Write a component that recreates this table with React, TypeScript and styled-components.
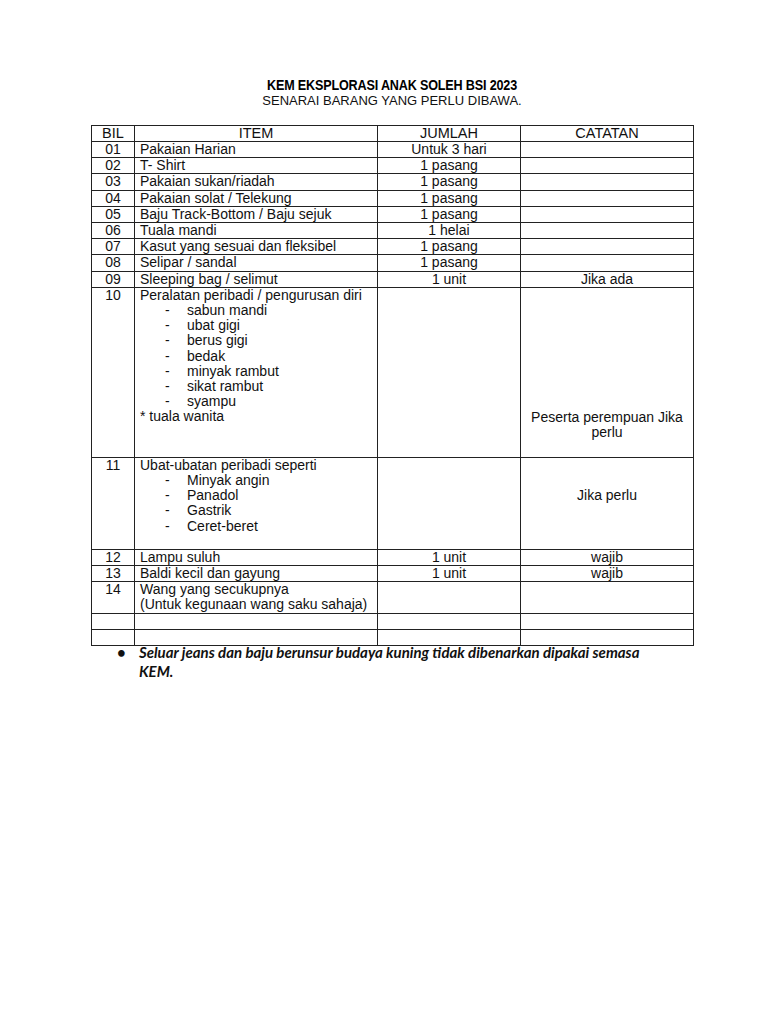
import React from 'react';
import styled, { createGlobalStyle } from 'styled-components';

const GlobalStyle = createGlobalStyle`
  html, body {
    margin: 0;
    padding: 0;
    background: #fff;
  }
  body {
    font-family: 'Liberation Sans', Arial, sans-serif;
    color: #111;
  }
`;

const Page = styled.div`
  width: 768px;
  min-height: 1024px;
  padding: 77px 0 0 91px;
  box-sizing: border-box;
`;

const Sheet = styled.div`
  width: 602px;
`;

const Title = styled.h1`
  margin: 0;
  text-align: center;
  font-size: 15px;
  line-height: 16px;
  font-weight: bold;
  letter-spacing: -0.2px;
  transform: scaleX(0.84);
  color: #000;
`;

const Subtitle = styled.p`
  margin: 0 0 16px;
  text-align: center;
  font-size: 13px;
  line-height: 16px;
  color: #111;
`;

const Table = styled.table`
  width: 602px;
  border-collapse: collapse;
  table-layout: fixed;
  font-size: 14px;
`;

const HeadCell = styled.th`
  border: 1px solid #222;
  font-weight: normal;
  font-size: 14.5px;
  line-height: 15px;
  height: 15px;
  padding: 0 5px;
  text-align: center;
  vertical-align: top;
`;

const Cell = styled.td<{ $align?: 'left' | 'center'; $h: number }>`
  border: 1px solid #222;
  height: ${p => p.$h}px;
  padding: 0 5px;
  line-height: 15.2px;
  text-align: ${p => p.$align ?? 'center'};
  vertical-align: top;
  box-sizing: border-box;
`;

const Note = styled.div<{ $top?: number }>`
  padding-top: ${p => p.$top ?? 0}px;
`;

const SubList = styled.ul`
  list-style: none;
  margin: 0;
  padding: 0;
`;

const SubItem = styled.li`
  display: flex;
  padding-left: 25px;
`;

const Dash = styled.span`
  width: 22px;
`;

const Remarks = styled.ul`
  margin: -3px 0 0;
  padding: 0 0 0 26px;
  width: 540px;
  font-family: Lato, 'Open Sans', sans-serif;
  font-weight: bold;
  font-style: italic;
  font-size: 15px;
  line-height: 19px;
  color: #111;
`;

const Remark = styled.li`
  list-style: none;
  position: relative;
  padding-left: 22px;
  &::before {
    content: '•';
    position: absolute;
    left: 0;
    font-style: normal;
  }
`;

type Row = {
  no: string;
  item: string;
  extra?: string;
  sub?: string[];
  tail?: string;
  jumlah?: string;
  catatan?: string;
  notePad?: number;
  h: number;
};

const rows: Row[] = [
  { no: '01', item: 'Pakaian Harian', jumlah: 'Untuk 3 hari', h: 16 },
  { no: '02', item: 'T- Shirt', jumlah: '1 pasang', h: 16 },
  { no: '03', item: 'Pakaian sukan/riadah', jumlah: '1 pasang', h: 16 },
  { no: '04', item: 'Pakaian solat / Telekung', jumlah: '1 pasang', h: 16 },
  { no: '05', item: 'Baju Track-Bottom / Baju sejuk', jumlah: '1 pasang', h: 16 },
  { no: '06', item: 'Tuala mandi', jumlah: '1 helai', h: 16 },
  { no: '07', item: 'Kasut yang sesuai dan fleksibel', jumlah: '1 pasang', h: 16 },
  { no: '08', item: 'Selipar / sandal', jumlah: '1 pasang', h: 16 },
  { no: '09', item: 'Sleeping bag / selimut', jumlah: '1 unit', catatan: 'Jika ada', h: 16 },
  {
    no: '10',
    item: 'Peralatan peribadi / pengurusan diri',
    sub: ['sabun mandi', 'ubat gigi', 'berus gigi', 'bedak', 'minyak rambut', 'sikat rambut', 'syampu'],
    tail: '* tuala wanita',
    catatan: 'Peserta perempuan Jika perlu',
    notePad: 122,
    h: 170,
  },
  {
    no: '11',
    item: 'Ubat-ubatan peribadi seperti',
    sub: ['Minyak angin', 'Panadol', 'Gastrik', 'Ceret-beret'],
    catatan: 'Jika perlu',
    notePad: 30,
    h: 92,
  },
  { no: '12', item: 'Lampu suluh', jumlah: '1 unit', catatan: 'wajib', h: 16 },
  { no: '13', item: 'Baldi kecil dan gayung', jumlah: '1 unit', catatan: 'wajib', h: 16 },
  { no: '14', item: 'Wang yang secukupnya', extra: '(Untuk kegunaan wang saku sahaja)', h: 32 },
  { no: '', item: '', h: 16 },
  { no: '', item: '', h: 16 },
];

const App: React.FC = () => {
  return (
    <Page>
      <GlobalStyle />
      <Sheet>
        <Title>KEM EKSPLORASI ANAK SOLEH BSI 2023</Title>
        <Subtitle>SENARAI BARANG YANG PERLU DIBAWA.</Subtitle>
        <Table>
          <colgroup>
            <col style={{ width: 43 }} />
            <col style={{ width: 243 }} />
            <col style={{ width: 143 }} />
            <col style={{ width: 173 }} />
          </colgroup>
          <thead>
            <tr>
              <HeadCell>BIL</HeadCell>
              <HeadCell>ITEM</HeadCell>
              <HeadCell>JUMLAH</HeadCell>
              <HeadCell>CATATAN</HeadCell>
            </tr>
          </thead>
          <tbody>
            {rows.map((r, i) => (
              <tr key={i}>
                <Cell $h={r.h}>{r.no}</Cell>
                <Cell $h={r.h} $align="left">
                  {r.item}
                  {r.extra && <div>{r.extra}</div>}
                  {r.sub && (
                    <SubList>
                      {r.sub.map(s => (
                        <SubItem key={s}>
                          <Dash>-</Dash>
                          {s}
                        </SubItem>
                      ))}
                    </SubList>
                  )}
                  {r.tail && <div>{r.tail}</div>}
                </Cell>
                <Cell $h={r.h}>{r.jumlah}</Cell>
                <Cell $h={r.h}>
                  <Note $top={r.notePad}>{r.catatan}</Note>
                </Cell>
              </tr>
            ))}
          </tbody>
        </Table>
        <Remarks>
          <Remark>
            Seluar jeans dan baju berunsur budaya kuning tidak dibenarkan dipakai semasa KEM.
          </Remark>
        </Remarks>
      </Sheet>
    </Page>
  );
};

export default App;
